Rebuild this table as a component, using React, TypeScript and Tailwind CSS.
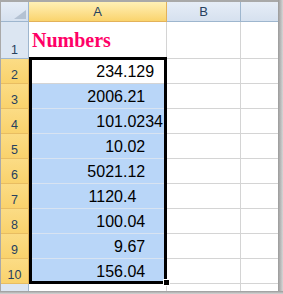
import React from "react";

const data: { v: string; d: number }[] = [
  { v: "234.129", d: 3 },
  { v: "2006.21", d: 2 },
  { v: "101.0234", d: 4 },
  { v: "10.02", d: 2 },
  { v: "5021.12", d: 2 },
  { v: "1120.4", d: 1 },
  { v: "100.04", d: 2 },
  { v: "9.67", d: 2 },
  { v: "156.04", d: 2 },
];

const pad = ["", "0", "00", "000", "0000"];

export default function App() {
  return (
    <div className="flex flex-col w-[283px] h-[294px] bg-white overflow-hidden font-['Liberation_Sans',Arial,sans-serif]">
      <div className="flex h-[291px]">
        <div className="relative w-[278px] h-[291px] border-t-2 border-l border-[#a9a9a9] flex flex-col">
          {/* header row */}
          <div className="flex h-[20px]">
            <div className="w-[28px] h-full border-r border-b border-[#9eb6ce] bg-gradient-to-b from-[#e6edf7] to-[#d6e1ef] flex items-end justify-end pr-[2px] pb-[2px]">
              <svg width="12" height="9" viewBox="0 0 12 9">
                <polygon points="12,0 12,9 0,9" fill="#b4c2d3" />
              </svg>
            </div>
            <div className="w-[138px] h-full border-r border-b border-[#e3b25a] bg-gradient-to-b from-[#fff0b5] to-[#fad46c] flex items-center justify-center text-[13px] leading-none text-[#27415f]">
              A
            </div>
            <div className="w-[74px] h-full border-r border-b border-[#9eb6ce] bg-gradient-to-b from-[#e6edf7] to-[#d6e1ef] flex items-center justify-center text-[13px] leading-none text-[#27415f]">
              B
            </div>
            <div className="w-[37px] h-full border-b border-[#9eb6ce] bg-gradient-to-b from-[#e6edf7] to-[#d6e1ef]" />
          </div>
          {/* row 1 */}
          <div className="flex h-[37px]">
            <div className="w-[28px] h-full border-r border-b border-[#9eb6ce] bg-[#dce6f2] flex items-end justify-center pb-[2px] text-[12.5px] leading-none text-[#27415f]">
              1
            </div>
            <div className="w-[138px] h-full border-r border-b border-[#d4d4d4] flex items-end pl-[3px] pb-[8px]">
              <span className="font-['Liberation_Serif',serif] font-bold text-[20px] leading-none text-[#ff0066]">
                Numbers
              </span>
            </div>
            <div className="w-[74px] h-full border-r border-b border-[#d4d4d4]" />
            <div className="w-[37px] h-full border-b border-[#d4d4d4]" />
          </div>
          {data.map((r, i) => (
            <div key={i} className="flex h-[25px]">
              <div className="w-[28px] h-full border-r border-b border-r-[#e2b15a] border-b-[#e8bd62] bg-gradient-to-b from-[#fbdc85] to-[#f9d26c] flex items-end justify-center pb-[2px] text-[12.5px] leading-none text-[#27415f]">
                {i + 2}
              </div>
              <div
                className={
                  i === 0
                    ? "w-[138px] h-full border-r border-b border-[#d4d4d4] bg-white flex items-end justify-end pr-[3px] pb-[3px] text-[16px] leading-none text-black"
                    : "w-[138px] h-full border-r border-b border-[#d4d4d4] border-b-[#d8e3f1] bg-[#b9d6f8] flex items-end justify-end pr-[3px] pb-[3px] text-[16px] leading-none text-black"
                }
              >
                <span>{r.v}</span>
                <span className="invisible">{pad[4 - r.d]}</span>
              </div>
              <div className="w-[74px] h-full border-r border-b border-[#d4d4d4]" />
              <div className="w-[37px] h-full border-b border-[#d4d4d4]" />
            </div>
          ))}
          {/* row 11 partial */}
          <div className="flex h-[7px]">
            <div className="w-[28px] h-full border-r border-[#9eb6ce] bg-[#dce6f2]" />
            <div className="w-[138px] h-full border-r border-[#d4d4d4]" />
            <div className="w-[74px] h-full border-r border-[#d4d4d4]" />
            <div className="w-[37px] h-full" />
          </div>
          {/* selection border */}
          <div className="absolute left-[28px] top-[55px] w-[138px] h-[227px] border-[3px] border-black pointer-events-none" />
          {/* fill handle */}
          <div className="absolute left-[162px] top-[277px] w-[7px] h-[7px] bg-black border border-white" />
        </div>
        <div className="w-[5px] h-full bg-gradient-to-r from-[#9a9a9a] to-[#d6d6d6]" />
      </div>
      <div className="h-[3px] w-full bg-gradient-to-b from-[#9a9a9a] to-[#d6d6d6]" />
    </div>
  );
}
